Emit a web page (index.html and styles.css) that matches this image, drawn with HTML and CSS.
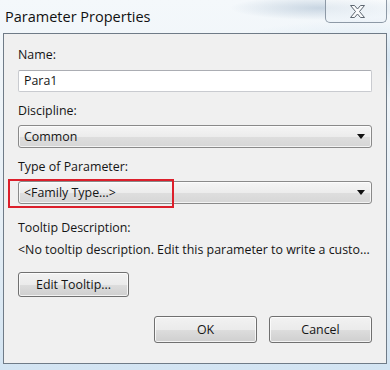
FILE: index.html
```html
<!DOCTYPE html>
<html>
<head>
<meta charset="utf-8">
<link rel="stylesheet" href="styles.css">
</head>
<body>
<div class="window">
  <div class="titlebar">
    <div class="title">Parameter Properties</div>
    <div class="close">
      <svg width="17" height="15" viewBox="0 0 17 15">
        <path d="M1.5 1.5 H5.5 L8.5 5 L11.5 1.5 H15.5 L10.5 7.5 L15.5 13.5 H11.5 L8.5 10 L5.5 13.5 H1.5 L6.5 7.5 Z" fill="#fafbfc" stroke="#5d6670" stroke-width="1" stroke-linejoin="round"/>
      </svg>
    </div>
  </div>
  <div class="panel">
    <div class="label first">Name:</div>
    <div class="input">Para1</div>
    <div class="label">Discipline:</div>
    <div class="select"><span>Common</span><i class="arrow"></i></div>
    <div class="label">Type of Parameter:</div>
    <div class="select-wrap">
      <div class="select"><span>&lt;Family Type...&gt;</span><i class="arrow"></i></div>
      <div class="highlight"></div>
    </div>
    <div class="label tip">Tooltip Description:</div>
    <div class="desc">&lt;No tooltip description. Edit this parameter to write a custo...</div>
    <div class="btn edit">Edit Tooltip...</div>
    <div class="actions">
      <div class="btn big">OK</div>
      <div class="btn big">Cancel</div>
    </div>
  </div>
</div>
</body>
</html>
```
FILE: styles.css
```css
html, body {
  margin: 0;
  padding: 0;
}
body {
  width: 390px;
  height: 370px;
  overflow: hidden;
  font-family: "Open Sans", "Noto Sans", sans-serif;
  font-size: 12.4px;
  color: #151515;
  background:
    radial-gradient(ellipse 90px 12px at 320px 8px, rgba(120,150,180,0.35), transparent),
    radial-gradient(ellipse 160px 40px at 360px 60px, rgba(190,215,235,0.6), transparent),
    linear-gradient(180deg, #f4f8fb 0%, #e6eff6 60%, #d3e4f2 100%);
}
.window {
  width: 390px;
  height: 370px;
}
.titlebar {
  height: 33px;
  display: flex;
  align-items: flex-start;
}
.title {
  font-size: 14.5px;
  color: #111;
  padding-left: 5px;
  margin-top: 8px;
  line-height: 18px;
}
.close {
  margin-left: auto;
  margin-right: 3px;
  width: 58px;
  height: 22px;
  border: 1px solid #8d99a6;
  border-top: none;
  border-radius: 0 0 5px 5px;
  background: linear-gradient(180deg, rgba(255,255,255,0.5), rgba(235,242,248,0.7));
  display: flex;
  align-items: center;
  justify-content: center;
  padding-left: 2px;
}
.close svg { display: block; }
.panel {
  margin: 0 3px;
  height: 329px;
  border: 1px solid #6f7b87;
  background: #f0f0f0;
  padding: 0 14px;
  box-sizing: content-box;
}
.label {
  height: 16px;
  line-height: 16px;
  margin-top: 11px;
}
.label.first { margin-top: 13px; }
.label.tip { margin-top: 16px; }
.input {
  margin-top: 7px;
  height: 20px;
  line-height: 20px;
  border: 1px solid #c9cbd0;
  border-top-color: #abadb3;
  background: #fff;
  padding-left: 5px;
  border-radius: 2px;
}
.select {
  margin-top: 6px;
  height: 21px;
  line-height: 21px;
  border: 1px solid #8a8a8a;
  border-radius: 3px;
  background: linear-gradient(180deg, #f5f5f5 0%, #ececec 50%, #dedede 51%, #d6d6d6 100%);
  box-shadow: inset 0 0 0 1px rgba(255,255,255,0.7);
  padding-left: 5px;
  display: flex;
  align-items: center;
  justify-content: space-between;
  padding-right: 6px;
}
.arrow {
  width: 0;
  height: 0;
  border-left: 4px solid transparent;
  border-right: 4px solid transparent;
  border-top: 5px solid #111;
}
.select-wrap {
  position: relative;
}
.highlight {
  position: absolute;
  left: -10px;
  top: -2px;
  width: 162px;
  height: 25px;
  border: 2px solid #dc1f2b;
}
.desc {
  margin-top: 6px;
  height: 16px;
  line-height: 16px;
  white-space: nowrap;
  overflow: hidden;
}
.btn {
  height: 23px;
  line-height: 23px;
  border: 1px solid #707070;
  border-radius: 3px;
  background: linear-gradient(180deg, #f2f2f2 0%, #ebebeb 50%, #dddddd 51%, #cfcfcf 100%);
  box-shadow: inset 0 0 0 1px rgba(255,255,255,0.75);
  text-align: center;
}
.edit {
  margin-top: 14px;
  width: 109px;
}
.actions {
  margin-top: 19px;
  display: flex;
  justify-content: flex-end;
  gap: 12px;
}
.big {
  width: 101px;
  height: 25px;
  line-height: 25px;
}
```
